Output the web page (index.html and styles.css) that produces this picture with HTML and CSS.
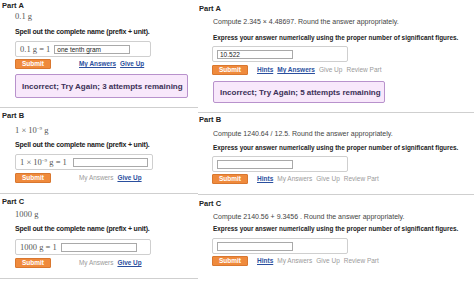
FILE: index.html
```html
<!DOCTYPE html>
<html>
<head>
<meta charset="utf-8">
<link rel="stylesheet" href="styles.css">
</head>
<body>
<div class="page">
  <div class="col col-left">
    <section class="part part-la">
      <div class="part-title">Part A</div>
      <div class="value">0.1 g</div>
      <div class="prompt">Spell out the complete name (prefix + unit).</div>
      <div class="answer">
        <span class="math">0.1 g = 1</span>
        <span class="field field-short">one tenth gram</span>
      </div>
      <div class="actions">
        <span class="btn">Submit</span>
        <span class="links links-left"><a class="lnk on">My Answers</a><a class="lnk on">Give Up</a></span>
      </div>
      <div class="feedback">Incorrect; Try Again; 3 attempts remaining</div>
    </section>
    <section class="part part-lb">
      <div class="part-title">Part B</div>
      <div class="value">1 × 10<sup>−9</sup> g</div>
      <div class="prompt">Spell out the complete name (prefix + unit).</div>
      <div class="answer">
        <span class="math">1 × 10<sup>−9</sup> g = 1</span>
        <span class="field"></span>
      </div>
      <div class="actions">
        <span class="btn">Submit</span>
        <span class="links links-left"><a class="lnk off">My Answers</a><a class="lnk on">Give Up</a></span>
      </div>
    </section>
    <section class="part part-lc">
      <div class="part-title">Part C</div>
      <div class="value">1000 g</div>
      <div class="prompt">Spell out the complete name (prefix + unit).</div>
      <div class="answer">
        <span class="math">1000 g = 1</span>
        <span class="field"></span>
      </div>
      <div class="actions">
        <span class="btn">Submit</span>
        <span class="links links-left"><a class="lnk off">My Answers</a><a class="lnk on">Give Up</a></span>
      </div>
    </section>
  </div>
  <div class="col col-right">
    <section class="part part-ra">
      <div class="part-title">Part A</div>
      <div class="text">Compute 2.345 × 4.48697. Round the answer appropriately.</div>
      <div class="prompt">Express your answer numerically using the proper number of significant figures.</div>
      <div class="answer answer-wide">
        <span class="field">10.522</span>
      </div>
      <div class="actions">
        <span class="btn">Submit</span>
        <span class="links"><a class="lnk on">Hints</a><a class="lnk on">My Answers</a><a class="lnk off">Give Up</a><a class="lnk off">Review Part</a></span>
      </div>
      <div class="feedback">Incorrect; Try Again; 5 attempts remaining</div>
    </section>
    <section class="part part-rb">
      <div class="part-title">Part B</div>
      <div class="text">Compute 1240.64 / 12.5. Round the answer appropriately.</div>
      <div class="prompt">Express your answer numerically using the proper number of significant figures.</div>
      <div class="answer answer-wide">
        <span class="field"></span>
      </div>
      <div class="actions">
        <span class="btn">Submit</span>
        <span class="links"><a class="lnk on">Hints</a><a class="lnk off">My Answers</a><a class="lnk off">Give Up</a><a class="lnk off">Review Part</a></span>
      </div>
    </section>
    <section class="part part-rc">
      <div class="part-title">Part C</div>
      <div class="text">Compute 2140.56 + 9.3456 . Round the answer appropriately.</div>
      <div class="prompt">Express your answer numerically using the proper number of significant figures.</div>
      <div class="answer answer-wide">
        <span class="field"></span>
      </div>
      <div class="actions">
        <span class="btn">Submit</span>
        <span class="links"><a class="lnk on">Hints</a><a class="lnk off">My Answers</a><a class="lnk off">Give Up</a><a class="lnk off">Review Part</a></span>
      </div>
    </section>
  </div>
</div>
</body>
</html>
```
FILE: styles.css
```css
* { box-sizing: border-box; }
html, body { margin: 0; padding: 0; background: #fff; }
body {
  font-family: "Liberation Sans", Arial, sans-serif;
  color: #333;
  width: 474px;
  height: 299px;
  overflow: hidden;
}
.page { display: flex; align-items: flex-start; }
.col-left { width: 198px; }
.col-right { flex: 1; }

.part { display: flex; flex-direction: column; align-items: flex-start; white-space: nowrap; }
.part-title {
  font-weight: bold;
  font-size: 7.5px;
  line-height: 10px;
  color: #222;
  margin-left: 2px;
}
.col-right .part-title { margin-left: 1px; }
.value {
  font-family: "Liberation Serif", "Times New Roman", serif;
  font-size: 8.5px;
  line-height: 10px;
  color: #555;
  margin-left: 15px;
}
sup { font-size: 5px; line-height: 0; vertical-align: 3px; }
.text {
  font-size: 7px;
  line-height: 10px;
  color: #444;
  margin-left: 15px;
}
.prompt {
  font-weight: bold;
  font-size: 7px;
  letter-spacing: -0.2px;
  line-height: 10px;
  color: #222;
  margin-left: 15px;
}
.col-right .prompt { font-size: 6.4px; letter-spacing: 0; }
.answer {
  margin-left: 15px;
  height: 16px;
  border: 1px solid #cfcfcf;
  border-radius: 2px;
  display: flex;
  align-items: center;
  padding: 0 4px;
  gap: 4px;
  background: #fff;
}
.col-left .answer { width: 136px; }
.answer-wide { width: 136px; margin-left: 14px; }
.math {
  font-family: "Liberation Serif", "Times New Roman", serif;
  font-size: 8.5px;
  color: #555;
  white-space: nowrap;
}
.field {
  width: 76px;
  height: 9px;
  border: 1px solid #a9a9a9;
  font-size: 6.5px;
  line-height: 7px;
  padding-left: 2px;
  color: #222;
  background: #fff;
}
.actions {
  display: flex;
  align-items: center;
  margin-left: 15px;
}
.col-right .actions { margin-left: 14px; }
.btn {
  width: 36px;
  height: 10px;
  background: #ef8a3c;
  border: 1px solid #d9772f;
  border-radius: 1px;
  color: #fff;
  font-weight: bold;
  font-size: 6.5px;
  line-height: 8px;
  text-align: center;
}
.links { display: flex; gap: 4px; margin-left: 9px; }
.links-left { margin-left: 28px; gap: 4px; }
.lnk { font-size: 6.4px; line-height: 8px; }
.col-right .lnk { font-size: 6.5px; }
.lnk.on { color: #2a4f9e; font-weight: bold; text-decoration: underline; }
.lnk.off { color: #9a9a9a; }
.feedback {
  margin-left: 15px;
  border: 1px solid #b892cc;
  border-radius: 2px;
  background: #f8e8fb;
  color: #3c3157;
  font-weight: bold;
  font-size: 8px;
  display: flex;
  align-items: center;
  padding-left: 6px;
}

/* left column */
.part-la { height: 107px; padding-top: 1px; }
.part-la .prompt { margin-top: 6px; }
.part-la .answer { margin-top: 4px; }
.part-la .actions { margin-top: 2px; }
.part-la .feedback { margin-top: 5px; width: 173px; height: 24px; }

.part-lb { border-top: 1px solid #cfcfcf; height: 86px; padding-top: 3px; }
.part-lb .value { margin-top: 4px; }
.part-lb .prompt { margin-top: 5px; }
.part-lb .answer { margin-top: 4px; width: 138px; }
.part-lb .actions { margin-top: 3px; }
.part-lb .field { margin-left: 2px; }

.part-lc { border-top: 1px solid #cfcfcf; border-bottom: 1px solid #cfcfcf; height: 86px; padding-top: 3px; }
.part-lc .value { margin-top: 2px; }
.part-lc .prompt { margin-top: 5px; }
.part-lc .answer { margin-top: 5px; }
.part-lc .actions { margin-top: 3px; }

/* right column */
.part-ra { height: 112px; padding-top: 4px; }
.part-ra .text { margin-top: 3px; }
.part-ra .prompt { margin-top: 6px; }
.part-ra .answer { margin-top: 3px; }
.part-ra .actions { margin-top: 3px; }
.part-ra .feedback { margin-top: 6px; width: 172px; height: 22px; }

.part-rb { border-top: 1px solid #cfcfcf; height: 82px; padding-top: 2px; }
.part-rb .text { margin-top: 4px; }
.part-rb .prompt { margin-top: 4px; }
.part-rb .answer { margin-top: 3px; }
.part-rb .actions { margin-top: 2px; }

.part-rc { border-top: 1px solid #cfcfcf; height: 86px; padding-top: 4px; }
.part-rc .text { margin-top: 3px; }
.part-rc .prompt { margin-top: 2px; }
.part-rc .answer { margin-top: 4px; }
.part-rc .actions { margin-top: 2px; }
```
